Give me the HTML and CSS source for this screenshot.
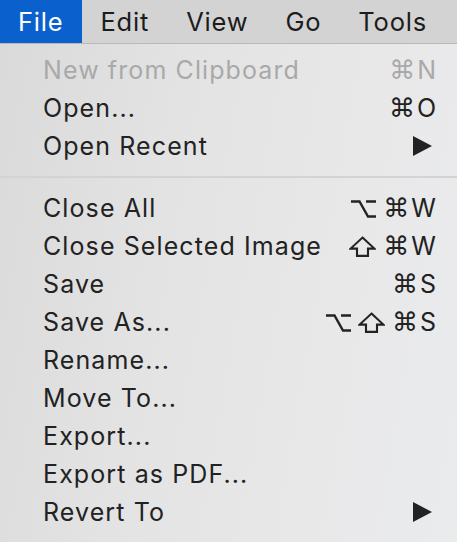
FILE: index.html
```html
<!DOCTYPE html>
<html>
<head>
<meta charset="utf-8">
<link rel="stylesheet" href="styles.css">
</head>
<body>
<div class="screen">
  <nav class="menubar">
    <span class="mb-item active">File</span>
    <span class="mb-item">Edit</span>
    <span class="mb-item">View</span>
    <span class="mb-item">Go</span>
    <span class="mb-item">Tools</span>
  </nav>
  <div class="menu">
    <div class="row disabled"><span class="label">New from Clipboard</span><span class="key"><span class="cmd"><span class="cm">⌘</span>N</span></span></div>
    <div class="row"><span class="label">Open...</span><span class="key"><span class="cmd"><span class="cm">⌘</span>O</span></span></div>
    <div class="row"><span class="label">Open Recent</span><span class="arrow"></span></div>
    <div class="sep"></div>
    <div class="row"><span class="label">Close All</span><span class="key"><svg class="opt" viewBox="0 0 25 18"><path d="M0 1.5H8.5L17 16.5H25M15 1.5H25"/></svg><span class="cmd"><span class="cm">⌘</span>W</span></span></div>
    <div class="row"><span class="label">Close Selected Image</span><span class="key"><svg class="shift" viewBox="0 0 27 21"><path d="M13.5 1.6L25.4 12.6H19V19.9H8V12.6H1.6Z"/></svg><span class="cmd"><span class="cm">⌘</span>W</span></span></div>
    <div class="row"><span class="label">Save</span><span class="key"><span class="cmd"><span class="cm">⌘</span>S</span></span></div>
    <div class="row"><span class="label">Save As...</span><span class="key"><svg class="opt" viewBox="0 0 25 18"><path d="M0 1.5H8.5L17 16.5H25M15 1.5H25"/></svg><svg class="shift" viewBox="0 0 27 21"><path d="M13.5 1.6L25.4 12.6H19V19.9H8V12.6H1.6Z"/></svg><span class="cmd"><span class="cm">⌘</span>S</span></span></div>
    <div class="row"><span class="label">Rename...</span></div>
    <div class="row"><span class="label">Move To...</span></div>
    <div class="row"><span class="label">Export...</span></div>
    <div class="row"><span class="label">Export as PDF...</span></div>
    <div class="row"><span class="label">Revert To</span><span class="arrow"></span></div>
  </div>
</div>
</body>
</html>
```
FILE: styles.css
```css
* { box-sizing: border-box; }
html, body { margin: 0; padding: 0; }
body {
  width: 457px;
  height: 542px;
  overflow: hidden;
  font-family: Inter, "Liberation Sans", "DejaVu Sans", sans-serif;
  background: #e6e6e7;
}
.screen {
  width: 457px;
  height: 542px;
  display: flex;
  flex-direction: column;
}
.menubar {
  height: 44px;
  display: flex;
  align-items: stretch;
  background: #d3d3d3;
  border-bottom: 1px solid #b9b9b9;
}
.mb-item {
  display: flex;
  align-items: center;
  padding: 0 19px 1px 18px;
  font-size: 25.5px;
  letter-spacing: 0.8px;
  color: #1c1c1c;
}
.mb-item.active {
  background: #0a60cc;
  color: #ffffff;
  padding-right: 19px;
}
.menu {
  flex: 1;
  padding: 7px 0 11px 0;
  background: linear-gradient(100deg, #dadadb 0%, #e3e3e4 35%, #e8e8e9 70%, #eaebed 100%);
}
.row {
  height: 38px;
  display: flex;
  align-items: center;
  justify-content: space-between;
  padding: 0 21px 0 43px;
  font-size: 25px;
  letter-spacing: 1.1px;
  color: #222222;
}
.row.disabled { color: #a9a9a9; }
.key {
  display: flex;
  align-items: center;
  gap: 7px;
}
.cmd {
  display: flex;
  align-items: baseline;
  font-size: 25px;
  line-height: 28px;
  letter-spacing: 0;
}
.cm {
  font-family: "DejaVu Sans", sans-serif;
  font-size: 26px;
  margin-right: 2px;
}
.opt {
  width: 25px;
  height: 18px;
  margin-top: 1px;
  fill: none;
  stroke: currentColor;
  stroke-width: 2.4;
}
.shift {
  width: 27px;
  height: 21px;
  fill: none;
  stroke: currentColor;
  stroke-width: 2.1;
  stroke-linejoin: miter;
}
.arrow {
  width: 0;
  height: 0;
  margin-right: 4px;
  border-top: 10px solid transparent;
  border-bottom: 10px solid transparent;
  border-left: 19px solid #222222;
}
.sep {
  height: 24px;
  display: flex;
  align-items: center;
}
.sep::before {
  content: "";
  display: block;
  width: 100%;
  height: 2px;
  background: #d3d3d4;
}
```
